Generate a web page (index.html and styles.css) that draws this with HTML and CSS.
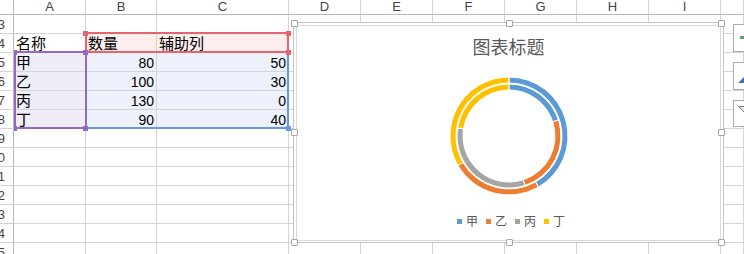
FILE: index.html
```html
<!DOCTYPE html>
<html lang="zh">
<head>
    <meta charset="UTF-8">
    <meta name="viewport" content="width=device-width, initial-scale=1.0">
    <title>图表标题</title>
    <link rel="stylesheet" href="styles.css">
</head>
<body>
    <div class="sheet">
        <div class="row head">
            <div class="corner"></div>
            <div class="ch">A</div><div class="ch">B</div><div class="ch">C</div><div class="ch">D</div><div class="ch">E</div>
            <div class="ch">F</div><div class="ch">G</div><div class="ch">H</div><div class="ch">I</div><div class="ch"></div>
        </div>
        <div class="row">
            <div class="rh">3</div>
            <div class="cell"></div><div class="cell"></div><div class="cell"></div><div class="cell"></div><div class="cell"></div>
            <div class="cell"></div><div class="cell"></div><div class="cell"></div><div class="cell"></div><div class="cell"></div>
        </div>
        <div class="row">
            <div class="rh">4</div>
            <div class="cell txt">名称</div><div class="cell txt pink">数量</div><div class="cell txt pink">辅助列</div><div class="cell"></div><div class="cell"></div>
            <div class="cell"></div><div class="cell"></div><div class="cell"></div><div class="cell"></div><div class="cell"></div>
        </div>
        <div class="row">
            <div class="rh">5</div>
            <div class="cell txt lav">甲</div><div class="cell num blu">80</div><div class="cell num blu">50</div><div class="cell"></div><div class="cell"></div>
            <div class="cell"></div><div class="cell"></div><div class="cell"></div><div class="cell"></div><div class="cell"></div>
        </div>
        <div class="row">
            <div class="rh">6</div>
            <div class="cell txt lav">乙</div><div class="cell num blu">100</div><div class="cell num blu">30</div><div class="cell"></div><div class="cell"></div>
            <div class="cell"></div><div class="cell"></div><div class="cell"></div><div class="cell"></div><div class="cell"></div>
        </div>
        <div class="row">
            <div class="rh">7</div>
            <div class="cell txt lav">丙</div><div class="cell num blu">130</div><div class="cell num blu">0</div><div class="cell"></div><div class="cell"></div>
            <div class="cell"></div><div class="cell"></div><div class="cell"></div><div class="cell"></div><div class="cell"></div>
        </div>
        <div class="row">
            <div class="rh">8</div>
            <div class="cell txt lav">丁</div><div class="cell num blu">90</div><div class="cell num blu">40</div><div class="cell"></div><div class="cell"></div>
            <div class="cell"></div><div class="cell"></div><div class="cell"></div><div class="cell"></div><div class="cell"></div>
        </div>
        <div class="row">
            <div class="rh">9</div>
            <div class="cell"></div><div class="cell"></div><div class="cell"></div><div class="cell"></div><div class="cell"></div>
            <div class="cell"></div><div class="cell"></div><div class="cell"></div><div class="cell"></div><div class="cell"></div>
        </div>
        <div class="row">
            <div class="rh">10</div>
            <div class="cell"></div><div class="cell"></div><div class="cell"></div><div class="cell"></div><div class="cell"></div>
            <div class="cell"></div><div class="cell"></div><div class="cell"></div><div class="cell"></div><div class="cell"></div>
        </div>
        <div class="row">
            <div class="rh">11</div>
            <div class="cell"></div><div class="cell"></div><div class="cell"></div><div class="cell"></div><div class="cell"></div>
            <div class="cell"></div><div class="cell"></div><div class="cell"></div><div class="cell"></div><div class="cell"></div>
        </div>
        <div class="row">
            <div class="rh">12</div>
            <div class="cell"></div><div class="cell"></div><div class="cell"></div><div class="cell"></div><div class="cell"></div>
            <div class="cell"></div><div class="cell"></div><div class="cell"></div><div class="cell"></div><div class="cell"></div>
        </div>
        <div class="row">
            <div class="rh">13</div>
            <div class="cell"></div><div class="cell"></div><div class="cell"></div><div class="cell"></div><div class="cell"></div>
            <div class="cell"></div><div class="cell"></div><div class="cell"></div><div class="cell"></div><div class="cell"></div>
        </div>
        <div class="row">
            <div class="rh">14</div>
            <div class="cell"></div><div class="cell"></div><div class="cell"></div><div class="cell"></div><div class="cell"></div>
            <div class="cell"></div><div class="cell"></div><div class="cell"></div><div class="cell"></div><div class="cell"></div>
        </div>
        <div class="row">
            <div class="rh">15</div>
            <div class="cell"></div><div class="cell"></div><div class="cell"></div><div class="cell"></div><div class="cell"></div>
            <div class="cell"></div><div class="cell"></div><div class="cell"></div><div class="cell"></div><div class="cell"></div>
        </div>

        <!-- range highlights for the chart source -->
        <div class="sel sel-blue"></div>
        <div class="sel sel-purple"></div>
        <div class="sel sel-red"></div>
        <div class="hd red hd-r1"></div>
        <div class="hd red hd-r2"></div>
        <div class="hd red hd-r3"></div>
        <div class="hd blue hd-b1"></div>
        <div class="hd purple hd-p1"></div>
        <div class="hd purple hd-p2 thin"></div>
        <div class="hd purple hd-p3 thin"></div>
        <div class="hd purple hd-p4"></div>

        <div class="chart">
            <div class="plot">
                <div class="title">图表标题</div>
                <svg class="donut" width="120" height="120" viewBox="-60 -60 120 120">
                    <!-- inner ring: 数量 -->
                    <path fill="#5b9bd5" d="M0,-52 A52,52 0 0 1 49.46,-16.07 L43.75,-14.21 A46,46 0 0 0 0,-46 Z"/>
                    <path fill="#ed7d31" d="M49.46,-16.07 A52,52 0 0 1 16.07,49.46 L14.21,43.75 A46,46 0 0 0 43.75,-14.21 Z"/>
                    <path fill="#a5a5a5" d="M16.07,49.46 A52,52 0 0 1 -51.36,-8.13 L-45.43,-7.19 A46,46 0 0 0 14.21,43.75 Z"/>
                    <path fill="#ffc000" d="M-51.36,-8.13 A52,52 0 0 1 0,-52 L0,-46 A46,46 0 0 0 -45.43,-7.19 Z"/>
                    <!-- outer ring: 辅助列 -->
                    <path fill="#5b9bd5" d="M0,-59 A59,59 0 0 1 29.5,51.1 L26.5,45.9 A53,53 0 0 0 0,-53 Z"/>
                    <path fill="#ed7d31" d="M29.5,51.1 A59,59 0 0 1 -51.1,29.5 L-45.9,26.5 A53,53 0 0 0 26.5,45.9 Z"/>
                    <path fill="#ffc000" d="M-51.1,29.5 A59,59 0 0 1 0,-59 L0,-53 A53,53 0 0 0 -45.9,26.5 Z"/>
                </svg>
                <div class="legend">
                    <span class="item"><i class="key k1"></i>甲</span>
                    <span class="item"><i class="key k2"></i>乙</span>
                    <span class="item"><i class="key k3"></i>丙</span>
                    <span class="item"><i class="key k4"></i>丁</span>
                </div>
            </div>
            <div class="grip g-tl"></div>
            <div class="grip g-tm"></div>
            <div class="grip g-tr"></div>
            <div class="grip g-ml"></div>
            <div class="grip g-mr"></div>
            <div class="grip g-bl"></div>
            <div class="grip g-bm"></div>
            <div class="grip g-br"></div>
        </div>

        <div class="cbtn btn-plus">
            <svg width="24" height="26" viewBox="0 0 24 26">
                <rect x="6" y="11" width="12" height="3" fill="#5ea37e"/>
                <rect x="10.5" y="6.5" width="3" height="12" fill="#5ea37e"/>
            </svg>
        </div>
        <div class="cbtn btn-brush">
            <svg width="24" height="26" viewBox="0 0 24 26">
                <polygon points="4,20 12,12 15,15 10,20" fill="#3d72b8"/>
                <line x1="14" y1="13" x2="21" y2="6" stroke="#7f7f7f" stroke-width="2"/>
            </svg>
        </div>
        <div class="cbtn btn-filter">
            <svg width="24" height="25" viewBox="0 0 24 25">
                <polygon points="4.5,5.5 19.5,5.5 13.5,11.5 13.5,18.5 10.5,16.5 10.5,11.5" fill="#e6e6e6" stroke="#7a7a7a" stroke-width="1"/>
            </svg>
        </div>
    </div>
</body>
</html>
```

FILE: styles.css
```css
body {
    margin: 0;
    background-color: #fff;
    font-family: "Liberation Sans", "Noto Sans CJK SC", sans-serif;
}

.sheet {
    position: relative;
    width: 744px;
    height: 254px;
    overflow: hidden;
    background-color: #fff;
}

.row {
    display: grid;
    grid-template-columns: 14px 72px 71px 132px repeat(6, 72px) 1fr;
    height: 19px;
}

.row.head {
    height: 15px;
}

.corner,
.ch {
    box-sizing: border-box;
    border-bottom: 1px solid #b8b8b8;
    border-right: 1px solid #d4d4d4;
    font-size: 13px;
    line-height: 14px;
    color: #444;
    text-align: center;
}

.corner {
    border-right-color: #b8b8b8;
}

.rh {
    box-sizing: border-box;
    display: flex;
    justify-content: flex-end;
    overflow: hidden;
    padding: 1px 8px 0 0;
    border-right: 1px solid #b8b8b8;
    border-bottom: 1px solid #d4d4d4;
    font-size: 13px;
    line-height: 18px;
    color: #444;
    white-space: nowrap;
}

.cell {
    box-sizing: border-box;
    display: flex;
    align-items: flex-end;
    overflow: hidden;
    padding: 0 2px;
    border-right: 1px solid #d4d4d4;
    border-bottom: 1px solid #d4d4d4;
    font-size: 14px;
    line-height: 16px;
    color: #000;
    white-space: nowrap;
}

.txt {
    font-size: 15px;
}

.num {
    justify-content: flex-end;
}

.pink {
    background-color: #fdeeee;
}

.lav {
    background-color: #f1edf7;
}

.blu {
    background-color: #ecf1fb;
}

/* source range outlines */
.sel {
    position: absolute;
    box-sizing: border-box;
    border: 2px solid;
}

.sel-blue {
    left: 85px;
    top: 51px;
    width: 204px;
    height: 78px;
    border-color: #6b96e6;
}

.sel-purple {
    left: 14px;
    top: 51px;
    width: 73px;
    height: 78px;
    border-color: #9566c4;
}

.sel-red {
    left: 85px;
    top: 32px;
    width: 204px;
    height: 21px;
    border-color: #e6646c;
}

.hd {
    position: absolute;
    width: 5px;
    height: 5px;
}

.hd.thin {
    width: 3px;
}

.red { background-color: #e6646c; }
.blue { background-color: #6b96e6; }
.purple { background-color: #9566c4; }

.hd-r1 { left: 83px; top: 31px; }
.hd-r2 { left: 286px; top: 31px; }
.hd-r3 { left: 286px; top: 50px; }
.hd-b1 { left: 286px; top: 126px; }
.hd-p1 { left: 83px; top: 50px; }
.hd-p2 { left: 14px; top: 50px; }
.hd-p3 { left: 14px; top: 126px; }
.hd-p4 { left: 83px; top: 126px; }

/* chart object */
.chart {
    position: absolute;
    left: 293px;
    top: 22px;
    width: 431px;
    height: 221px;
    box-sizing: border-box;
    padding: 2px 2px 1px 2px;
    border: 1px solid #c4c4c4;
    background-color: #fff;
}

.plot {
    height: 100%;
    box-sizing: border-box;
    border: 1px solid #d9d9d9;
    display: flex;
    flex-direction: column;
    align-items: center;
}

.title {
    margin-top: 10px;
    font-family: "Noto Sans CJK SC", sans-serif;
    font-size: 18px;
    line-height: 20px;
    color: #595959;
}

.donut {
    display: block;
    margin-top: 20px;
}

.donut path {
    stroke: #fff;
    stroke-width: 1;
}

.legend {
    display: flex;
    gap: 8px;
    margin-top: 18px;
    margin-left: 5px;
    font-family: "Noto Sans CJK SC", sans-serif;
    font-size: 12px;
    line-height: 14px;
    color: #595959;
}

.item {
    display: flex;
    align-items: center;
    gap: 4px;
}

.key {
    display: block;
    width: 5px;
    height: 5px;
}

.k1 { background-color: #5b9bd5; }
.k2 { background-color: #ed7d31; }
.k3 { background-color: #a5a5a5; }
.k4 { background-color: #ffc000; }

.grip {
    position: absolute;
    width: 7px;
    height: 7px;
    box-sizing: border-box;
    border: 1px solid #a6a6a6;
    border-radius: 1px;
    background-color: #fff;
}

.g-tl { left: -3px; top: -3px; }
.g-tm { left: 212px; top: -3px; }
.g-tr { left: 424px; top: -3px; }
.g-ml { left: -3px; top: 106px; }
.g-mr { left: 424px; top: 106px; }
.g-bl { left: -3px; top: 216px; }
.g-bm { left: 212px; top: 216px; }
.g-br { left: 424px; top: 216px; }

/* chart side buttons */
.cbtn {
    position: absolute;
    left: 733px;
    width: 26px;
    height: 28px;
    box-sizing: border-box;
    border: 1px solid #ababab;
    background-color: #fff;
}

.cbtn svg {
    display: block;
}

.btn-plus { top: 24px; }
.btn-brush { top: 62px; }
.btn-filter { top: 100px; height: 27px; }
```
